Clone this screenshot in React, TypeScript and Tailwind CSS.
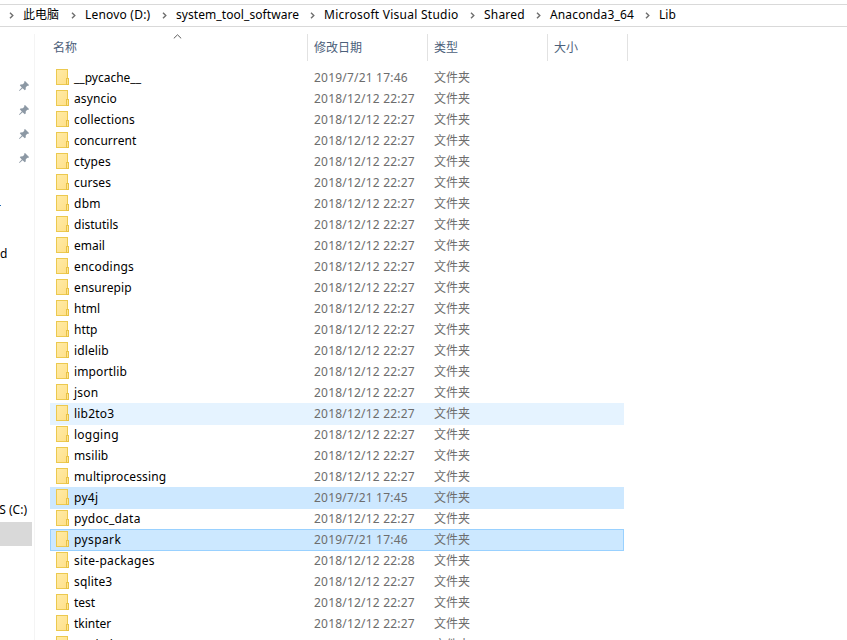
import type { ReactNode } from 'react';

interface Entry {
  name: string;
  modified: string;
  state?: 'hover' | 'selected' | 'focused';
  spacing?: string;
}

const DEFAULT_DATE = '2018/12/12 22:27';

const CRUMBS = [
  { label: '此电脑', className: 'w-[62px]' },
  { label: 'Lenovo (D:)', className: 'w-[91px] tracking-[0.2px]' },
  { label: 'system_tool_software', className: 'w-[148px] tracking-[0.07px]' },
  { label: 'Microsoft Visual Studio', className: 'w-[160px] tracking-[0.25px]' },
  { label: 'Shared', className: 'w-[66px] tracking-[0.2px]' },
  { label: 'Anaconda3_64', className: 'w-[109px] tracking-[0.14px]' },
  { label: 'Lib', className: 'w-[40px]' },
];

const ENTRIES: Entry[] = [
  { name: '__pycache__', modified: '2019/7/21 17:46', spacing: 'tracking-normal' },
  { name: 'asyncio', modified: DEFAULT_DATE },
  { name: 'collections', modified: DEFAULT_DATE },
  { name: 'concurrent', modified: DEFAULT_DATE, spacing: 'tracking-[0.05px]' },
  { name: 'ctypes', modified: DEFAULT_DATE },
  { name: 'curses', modified: DEFAULT_DATE },
  { name: 'dbm', modified: DEFAULT_DATE, spacing: 'tracking-[0.3px]' },
  { name: 'distutils', modified: DEFAULT_DATE, spacing: 'tracking-normal' },
  { name: 'email', modified: DEFAULT_DATE, spacing: 'tracking-normal' },
  { name: 'encodings', modified: DEFAULT_DATE, spacing: 'tracking-[0.2px]' },
  { name: 'ensurepip', modified: DEFAULT_DATE },
  { name: 'html', modified: DEFAULT_DATE, spacing: 'tracking-normal' },
  { name: 'http', modified: DEFAULT_DATE, spacing: 'tracking-normal' },
  { name: 'idlelib', modified: DEFAULT_DATE },
  { name: 'importlib', modified: DEFAULT_DATE },
  { name: 'json', modified: DEFAULT_DATE, spacing: 'tracking-[0.2px]' },
  { name: 'lib2to3', modified: DEFAULT_DATE, state: 'hover', spacing: 'tracking-[0.2px]' },
  { name: 'logging', modified: DEFAULT_DATE, spacing: 'tracking-[0.25px]' },
  { name: 'msilib', modified: DEFAULT_DATE },
  { name: 'multiprocessing', modified: DEFAULT_DATE },
  { name: 'py4j', modified: '2019/7/21 17:45', state: 'selected', spacing: 'tracking-[0.3px]' },
  { name: 'pydoc_data', modified: DEFAULT_DATE, spacing: 'tracking-[0.25px]' },
  { name: 'pyspark', modified: '2019/7/21 17:46', state: 'focused', spacing: 'tracking-[0.4px]' },
  { name: 'site-packages', modified: '2018/12/12 22:28', spacing: 'tracking-[0.32px]' },
  { name: 'sqlite3', modified: DEFAULT_DATE, spacing: 'tracking-[0.15px]' },
  { name: 'test', modified: DEFAULT_DATE, spacing: 'tracking-normal' },
  { name: 'tkinter', modified: DEFAULT_DATE, spacing: 'tracking-normal' },
  { name: 'turtledemo', modified: DEFAULT_DATE },
];

function rowClass(state: Entry['state']) {
  if (state === 'hover') {
    return 'bg-[#e5f3ff]';
  }

  if (state === 'selected') {
    return 'bg-[#cde8ff]';
  }

  if (state === 'focused') {
    return 'bg-[#cce8ff] outline outline-1 -outline-offset-1 outline-[#99d1ff]';
  }

  return '';
}

function Chevron() {
  return (
    <svg width="5" height="7" viewBox="0 0 5 7" className="shrink-0" fill="none">
      <path d="M1 0.8 3.8 3.5 1 6.2" stroke="#6e6e6e" strokeWidth="1.4" />
    </svg>
  );
}

function FolderIcon() {
  return (
    <svg width="13" height="16" viewBox="0 0 13 16" className="mb-0.5 shrink-0" fill="none">
      <defs>
        <linearGradient id="folder" x1="0" y1="0" x2="1" y2="1">
          <stop offset="0" stopColor="#ffeba6" />
          <stop offset="1" stopColor="#ffe08a" />
        </linearGradient>
      </defs>
      <rect x="0.5" y="0.5" width="11" height="15" fill="url(#folder)" stroke="#ecc94f" />
      <rect x="10.5" y="9.5" width="2" height="6" fill="#ffe593" stroke="#e8c245" />
    </svg>
  );
}

function PinIcon() {
  return (
    <svg width="10" height="10" viewBox="0 0 10 10" fill="#8c98a4">
      <path d="M6 0 10 4 9.2 5 8.3 4.8 6.8 6.3 6.7 8.6 5.8 9.3 3.6 7.2 0.5 10 0 9.5 2.8 6.4 0.8 4.3 1.5 3.4 3.8 3.3 5.3 1.8 5.1 0.8Z" />
    </svg>
  );
}

function HeaderCell({ className, children }: { className: string; children?: ReactNode }) {
  return (
    <div className={`h-[27px] shrink-0 border-r border-[#e2e2e2] leading-7 text-[#4c607a] ${className}`}>
      {children}
    </div>
  );
}

function AddressBar() {
  return (
    <div className="mt-1 flex h-[23px] shrink-0 items-center border-y border-[#d9d9d9] pl-[9px]">
      {CRUMBS.map((crumb) => (
        <div key={crumb.label} className={`flex shrink-0 items-center whitespace-nowrap ${crumb.className}`}>
          <Chevron />
          <span className="mb-0.5 ml-[9px] leading-[19px]">{crumb.label}</span>
        </div>
      ))}
    </div>
  );
}

function Sidebar() {
  return (
    <div className="mt-[7px] w-[35px] shrink-0 overflow-hidden border-r border-[#f4f4f4]">
      <div className="flex h-[168px] flex-col gap-[14px] pt-[47px] pl-[19px]">
        <PinIcon />
        <PinIcon />
        <PinIcon />
        <PinIcon />
      </div>
      <div className="mt-[3px] h-px w-px bg-[#1f6bb5]" />
      <div className="mt-[38px] h-5 leading-5">d</div>
      <div className="mt-[236px] flex h-5 w-[27px] justify-end leading-5 whitespace-nowrap">S (C:)</div>
      <div className="mt-[2px] h-6 w-8 bg-[#d9d9d9]" />
    </div>
  );
}

function FileRow({ entry }: { entry: Entry }) {
  return (
    <div className={`-mb-px flex h-[22px] w-[574px] shrink-0 items-center pl-1.5 ${rowClass(entry.state)}`}>
      <FolderIcon />
      <span className={`ml-[5px] w-[240px] ${entry.spacing ?? 'tracking-[0.12px]'}`}>{entry.name}</span>
      <span className="w-[120px] tracking-[0.2px] text-[#6d6d6d]">{entry.modified}</span>
      <span className="text-[#6d6d6d]">文件夹</span>
    </div>
  );
}

export default function App() {
  return (
    <div className="flex h-[640px] w-[847px] flex-col overflow-hidden bg-white font-['Noto_Sans','Noto_Sans_CJK_SC',sans-serif] text-[12px] text-black">
      <AddressBar />
      <div className="flex min-h-0 flex-1">
        <Sidebar />
        <div className="flex min-w-0 flex-1 flex-col pt-[7px]">
          <div className="relative flex h-[33px] shrink-0">
            <HeaderCell className="w-[273px] pl-[18px]">名称</HeaderCell>
            <HeaderCell className="w-[120px] pl-1.5">修改日期</HeaderCell>
            <HeaderCell className="w-[120px] pl-1.5">类型</HeaderCell>
            <HeaderCell className="w-20 pl-1.5">大小</HeaderCell>
            <svg
              width="9"
              height="5"
              viewBox="0 0 9 5"
              fill="none"
              className="absolute top-0 left-[138px]"
            >
              <path d="M0.8 4.4 4.5 0.8 8.2 4.4" stroke="#5c5c5c" />
            </svg>
          </div>
          <div className="flex flex-col pl-[15px]">
            {ENTRIES.map((entry) => (
              <FileRow key={entry.name} entry={entry} />
            ))}
          </div>
        </div>
      </div>
    </div>
  );
}
